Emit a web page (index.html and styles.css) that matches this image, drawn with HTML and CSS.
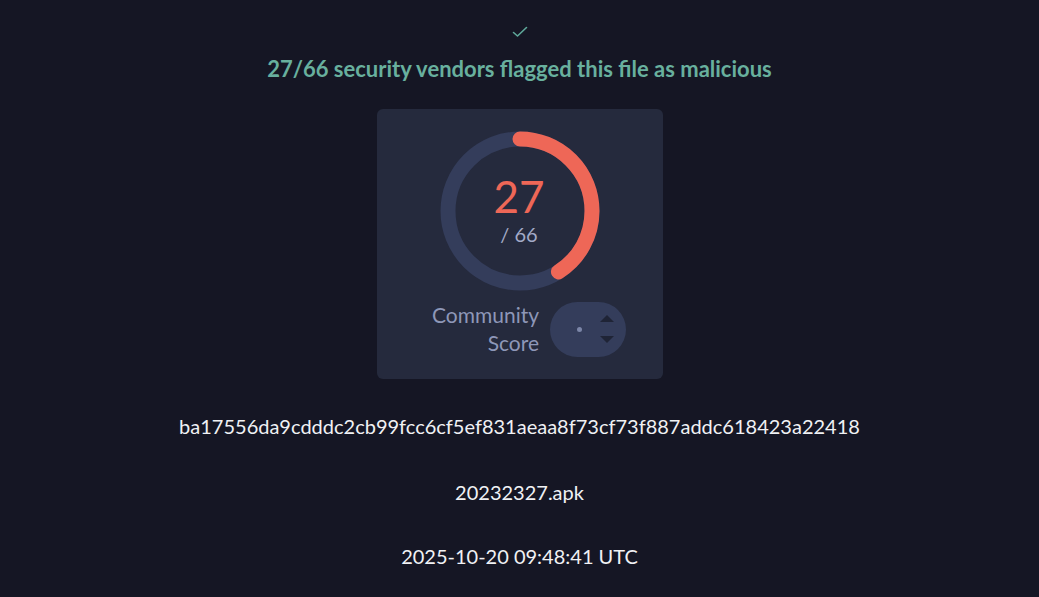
FILE: index.html
```html
<!DOCTYPE html>
<html>
<head>
<meta charset="utf-8">
<link rel="stylesheet" href="styles.css">
</head>
<body>
<main class="page">
  <div class="check">
    <svg width="16" height="12" viewBox="0 0 16 12"><path d="M1.5 6.5 L5.5 10 L14.5 1.5" fill="none" stroke="#5fa89a" stroke-width="1.6" stroke-linecap="round" stroke-linejoin="round"/></svg>
  </div>
  <h1 class="headline">27/66 security vendors flagged this file as malicious</h1>
  <section class="card">
    <div class="gauge">
      <svg class="ring" width="174" height="174" viewBox="0 0 174 174">
        <circle cx="87" cy="87" r="72" fill="none" stroke="#343d5b" stroke-width="15"/>
        <circle cx="87" cy="87" r="72" fill="none" stroke="#ee6757" stroke-width="15" stroke-linecap="round" stroke-dasharray="185.3 452.4" transform="rotate(-90 87 87)"/>
      </svg>
      <div class="gauge-text">
        <div class="score">27</div>
        <div class="total">/ 66</div>
      </div>
    </div>
    <div class="community">
      <div class="community-label">Community<br>Score</div>
      <div class="pill">
        <span class="dot"></span>
        <span class="arrows">
          <svg width="16" height="32" viewBox="0 0 16 32"><path d="M8 2 L15 9 L1 9 Z" fill="#1f2436"/><path d="M1 23 L15 23 L8 30 Z" fill="#1f2436"/></svg>
        </span>
      </div>
    </div>
  </section>
  <p class="line hash">ba17556da9cdddc2cb99fcc6cf5ef831aeaa8f73cf73f887addc618423a22418</p>
  <p class="line file">20232327.apk</p>
  <p class="line date">2025-10-20 09:48:41 UTC</p>
</main>
</body>
</html>
```

FILE: styles.css
```css
html, body {
  margin: 0;
  padding: 0;
  background: #151624;
}
body {
  font-family: "Lato", "Noto Sans", sans-serif;
  color: #eef0f4;
}
.page {
  display: flex;
  flex-direction: column;
  align-items: center;
  padding-top: 26px;
}
.check {
  height: 12px;
  display: flex;
  justify-content: center;
}
.check svg { display: block; }
.headline {
  margin: 19px 0 0;
  font-size: 22px;
  line-height: 24px;
  font-weight: 700;
  color: #68b09e;
}
.card {
  margin-top: 28px;
  width: 286px;
  height: 270px;
  box-sizing: border-box;
  background: #252a3d;
  border-radius: 6px;
  display: flex;
  flex-direction: column;
  align-items: center;
  padding-top: 15px;
}
.gauge {
  position: relative;
  width: 174px;
  height: 174px;
  margin-left: 1px;
}
.ring { display: block; }
.gauge-text {
  position: absolute;
  inset: 0;
  display: flex;
  flex-direction: column;
  align-items: center;
  justify-content: center;
  padding-bottom: 2px;
  padding-right: 2px;
}
.score {
  font-size: 44px;
  line-height: 48px;
  color: #ee6757;
}
.total {
  font-size: 20px;
  line-height: 28px;
  color: #a3abc8;
}
.community {
  display: flex;
  align-items: center;
  gap: 11px;
  margin-top: 3px;
  margin-left: 19px;
}
.community-label {
  text-align: right;
  font-size: 21px;
  line-height: 28px;
  color: #8e97b8;
}
.pill {
  width: 76px;
  height: 55px;
  border-radius: 28px;
  background: #343d5b;
  display: flex;
  align-items: center;
  box-sizing: border-box;
  padding-left: 27px;
  gap: 17px;
}
.dot {
  width: 5px;
  height: 5px;
  border-radius: 50%;
  background: #7c86a8;
}
.arrows svg { display: block; }
.line {
  margin: 0;
  font-size: 20px;
  line-height: 24px;
  color: #f0f1f4;
}
.hash { margin-top: 35px; }
.file { margin-top: 42px; }
.date { margin-top: 40px; }
```
